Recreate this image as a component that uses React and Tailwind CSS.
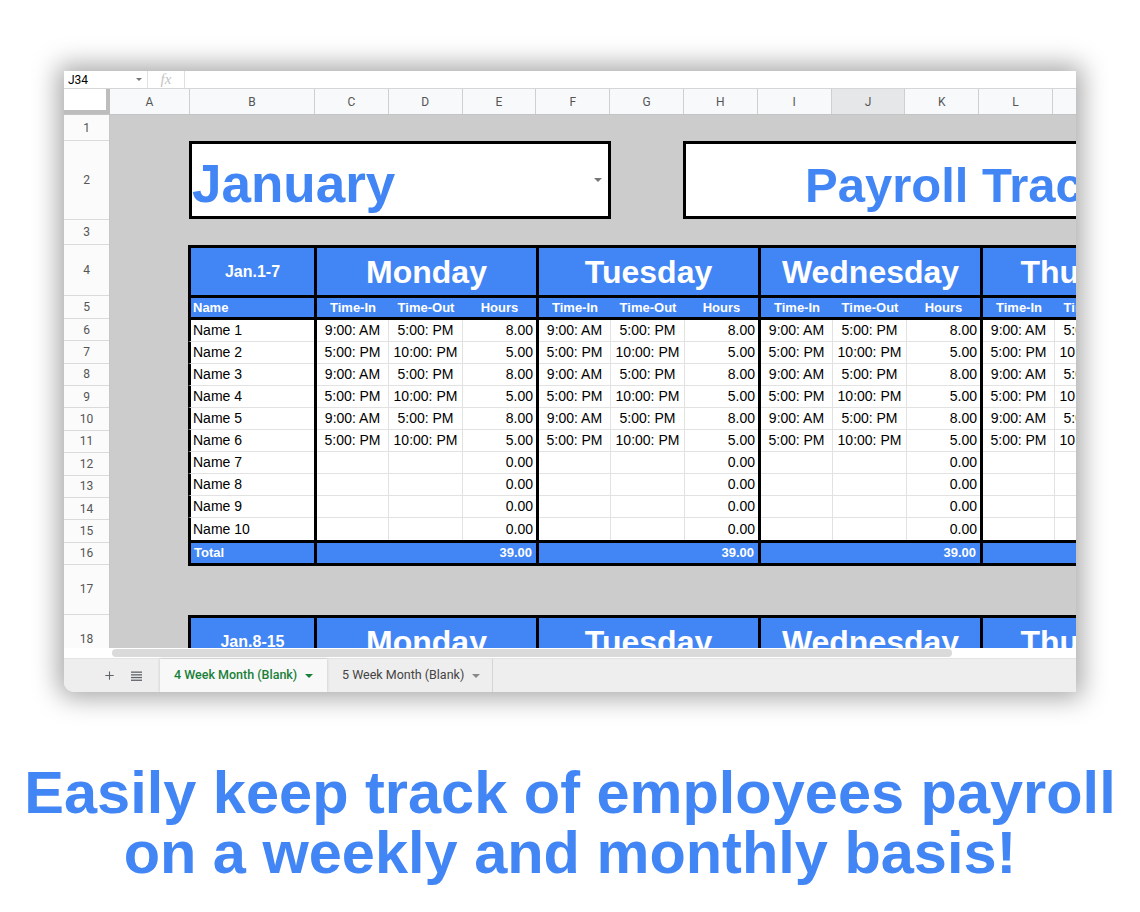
import { Plus } from "lucide-react";

const colHeaders = [
  { label: "A", w: "w-[80px]" },
  { label: "B", w: "w-[125px]" },
  ..."CDEFGHIJKL".split("").map((l) => ({ label: l, w: "w-[73.8px]" })),
  { label: "M", w: "w-[80px]" },
];

const rowHeads = [
  { n: 1, h: "h-[26px]" },
  { n: 2, h: "h-[79px]" },
  { n: 3, h: "h-[25px]" },
  { n: 4, h: "h-[51px]" },
  { n: 5, h: "h-[23px]" },
  ...[6, 7, 8, 9, 10, 11, 12, 13, 14, 15, 16].map((n) => ({ n, h: "h-[22.36px]" })),
  { n: 17, h: "h-[50px]" },
  { n: 18, h: "h-[50px]" },
];

const shifts = [
  { name: "Name 1", tin: "9:00: AM", tout: "5:00: PM", hrs: "8.00" },
  { name: "Name 2", tin: "5:00: PM", tout: "10:00: PM", hrs: "5.00" },
  { name: "Name 3", tin: "9:00: AM", tout: "5:00: PM", hrs: "8.00" },
  { name: "Name 4", tin: "5:00: PM", tout: "10:00: PM", hrs: "5.00" },
  { name: "Name 5", tin: "9:00: AM", tout: "5:00: PM", hrs: "8.00" },
  { name: "Name 6", tin: "5:00: PM", tout: "10:00: PM", hrs: "5.00" },
  { name: "Name 7", tin: "", tout: "", hrs: "0.00" },
  { name: "Name 8", tin: "", tout: "", hrs: "0.00" },
  { name: "Name 9", tin: "", tout: "", hrs: "0.00" },
  { name: "Name 10", tin: "", tout: "", hrs: "0.00" },
];

const days = ["Monday", "Tuesday", "Wednesday", "Thursday"];

function Caret({ className }) {
  return (
    <svg width="8" height="4" viewBox="0 0 8 4" className={className}>
      <polygon points="0,0 8,0 4,4" fill="currentColor" />
    </svg>
  );
}

function FormulaBar() {
  return (
    <div className="flex h-[18px] shrink-0 items-center border-b border-[#d6d6d6] bg-white font-['Roboto',sans-serif] text-[12px] text-black">
      <div className="flex h-full w-[84px] items-center justify-between border-r border-[#e0e0e0] pl-[4px] pr-[5px]">
        <span>J34</span>
        <Caret className="h-[3px] w-[6px] text-[#777]" />
      </div>
      <div className="flex h-full w-[37px] items-center justify-center border-r border-[#e0e0e0] font-['Liberation_Serif',serif] text-[15px] italic text-[#c4c4c4]">
        fx
      </div>
    </div>
  );
}

function ColumnHeaders() {
  return (
    <div className="flex h-[26px] shrink-0 border-b border-[#c4c4c4] bg-[#f8f9fa] font-['Roboto',sans-serif] text-[12px] text-[#555]">
      <div className="h-full w-[46px] shrink-0 border-b-4 border-r-4 border-[#bdbdbd] bg-white" />
      {colHeaders.map((c) => (
        <div
          key={c.label}
          className={`${c.w} flex shrink-0 items-center justify-center border-r border-[#cfcfcf] ${c.label === "J" ? "bg-[#e6e7e9]" : ""}`}
        >
          {c.label}
        </div>
      ))}
    </div>
  );
}

function RowHeaders() {
  return (
    <div className="w-[46px] shrink-0 border-r border-[#c7c7c7] bg-[#fbfbfb] font-['Roboto',sans-serif] text-[12px] text-[#555]">
      {rowHeads.map((r) => (
        <div key={r.n} className={`${r.h} flex items-center justify-center border-b border-[#dadada]`}>
          {r.n}
        </div>
      ))}
    </div>
  );
}

function WeekTable({ label, titleOnly }) {
  return (
    <div className="flex w-max flex-col text-black">
      <div className="h-[3px] bg-black" />

      {/* day titles */}
      <div className="flex h-[47px] bg-[#4285f4] font-bold text-white">
        <div className="flex w-[126px] items-center justify-center border-l-[3px] border-black text-[16px]">{label}</div>
        {days.map((d) => (
          <div key={d} className="flex w-[222px] items-center justify-center border-l-[3px] border-black text-[32px] leading-none">
            {d}
          </div>
        ))}
      </div>

      {!titleOnly && (
        <>
          <div className="h-[3px] bg-black" />

          {/* sub headers */}
          <div className="flex h-[19px] bg-[#4285f4] text-[13px] font-bold text-white">
            <div className="flex w-[126px] items-center border-l-[3px] border-black pl-[2px]">Name</div>
            {days.map((d) => (
              <div key={d} className="flex w-[222px] border-l-[3px] border-black">
                <div className="flex w-[72px] items-center justify-center">Time-In</div>
                <div className="flex w-[74px] items-center justify-center">Time-Out</div>
                <div className="flex w-[73px] items-center justify-center">Hours</div>
              </div>
            ))}
          </div>
          <div className="h-[3px] bg-black" />

          {/* rows */}
          {shifts.map((s, i) => (
            <div key={s.name} className="flex h-[22px] bg-white text-[14px]">
              <div className={`flex w-[126px] items-center border-l-[3px] border-black pl-[2px] ${i < 9 ? "border-b border-b-[#e2e2e2]" : ""}`}>
                {s.name}
              </div>
              {days.map((d) => (
                <div key={d} className="flex w-[222px] border-l-[3px] border-black">
                  <div className={`flex w-[72px] items-center justify-center border-r border-[#e2e2e2] ${i < 9 ? "border-b" : ""}`}>{s.tin}</div>
                  <div className={`flex w-[74px] items-center justify-center border-r border-[#e2e2e2] ${i < 9 ? "border-b" : ""}`}>{s.tout}</div>
                  <div className={`flex w-[73px] items-center justify-end border-[#e2e2e2] pr-[3px] ${i < 9 ? "border-b" : ""}`}>{s.hrs}</div>
                </div>
              ))}
            </div>
          ))}
          <div className="h-[3px] bg-black" />

          {/* total */}
          <div className="flex h-[20px] bg-[#4285f4] text-[13px] font-bold text-white">
            <div className="flex w-[126px] items-center border-l-[3px] border-black pl-[3px]">Total</div>
            {days.map((d) => (
              <div key={d} className="flex w-[222px] items-center justify-end border-l-[3px] border-black pr-[4px]">
                39.00
              </div>
            ))}
          </div>
          <div className="h-[3px] bg-black" />
        </>
      )}
    </div>
  );
}

function ListIcon() {
  return (
    <svg width="11" height="10" viewBox="0 0 11 10" className="text-[#5f6368]">
      <rect x="0" y="0.5" width="11" height="1.3" fill="currentColor" />
      <rect x="0" y="3.2" width="11" height="1.3" fill="currentColor" />
      <rect x="0" y="5.9" width="11" height="1.3" fill="currentColor" />
      <rect x="0" y="8.6" width="11" height="1.3" fill="currentColor" />
    </svg>
  );
}

function TabBar() {
  return (
    <div className="flex h-[34px] shrink-0 border-t border-[#e3e3e3] bg-[#eeeeee] font-['Roboto',sans-serif] text-[12.5px]">
      <div className="flex w-[96px] items-center gap-[15px] pl-[39px] text-[#5f6368]">
        <Plus size={13} strokeWidth={2} />
        <ListIcon />
      </div>
      <div className="flex w-[167px] items-center gap-[8px] bg-[#f8f8f8] pl-[14px] font-medium text-[#188038] shadow-[0_0_3px_rgba(0,0,0,0.18)]">
        <span className="whitespace-nowrap">4 Week Month (Blank)</span>
        <Caret className="text-[#188038]" />
      </div>
      <div className="flex w-[166px] items-center gap-[8px] border-r border-[#d4d4d4] pl-[15px] text-[#444]">
        <span className="whitespace-nowrap">5 Week Month (Blank)</span>
        <Caret className="text-[#888]" />
      </div>
    </div>
  );
}

function SheetWindow() {
  return (
    <div className="flex h-[621px] w-[1012px] flex-col overflow-hidden rounded-bl-[10px] bg-white shadow-[0_0_26px_6px_rgba(0,0,0,0.35)]">
      <FormulaBar />
      <ColumnHeaders />
      <div className="flex h-[533px] shrink-0 overflow-hidden">
        <RowHeaders />
        <div className="flex-1 overflow-hidden bg-[#cccccc] pl-[78px] pt-[26px]">
          <div className="ml-[1px] flex h-[78px]">
            <div className="relative flex w-[422px] shrink-0 items-end border-[3px] border-black bg-white pb-[1px]">
              <span className="text-[53px] font-bold leading-[1.15] text-[#4285f4]">January</span>
              <Caret className="absolute right-[6px] top-[34px] text-[#777]" />
            </div>
            <div className="ml-[72px] flex w-[600px] shrink-0 items-end border-[3px] border-black bg-white pb-[3px] pl-[119px]">
              <span className="whitespace-nowrap text-[49px] font-bold leading-[1.15] text-[#4285f4]">Payroll Tracker</span>
            </div>
          </div>
          <div className="mt-[26px]">
            <WeekTable label="Jan.1-7" />
          </div>
          <div className="mt-[49px]">
            <WeekTable label="Jan.8-15" titleOnly />
          </div>
        </div>
      </div>
      <div className="h-[10px] shrink-0 bg-white pl-[48px] pt-[1px]">
        <div className="h-[8px] w-[840px] rounded-full bg-[#dadada]" />
      </div>
      <TabBar />
    </div>
  );
}

export default function App() {
  return (
    <div className="h-[912px] w-[1140px] overflow-hidden bg-white font-['Liberation_Sans',Arial,sans-serif]">
      <div className="pl-[64px] pt-[71px]">
        <SheetWindow />
      </div>
      <p className="mt-[71px] text-center text-[59.5px] font-bold leading-[60px] text-[#4285f4]">
        Easily keep track of employees payroll
        <br />
        on a weekly and monthly basis!
      </p>
    </div>
  );
}
